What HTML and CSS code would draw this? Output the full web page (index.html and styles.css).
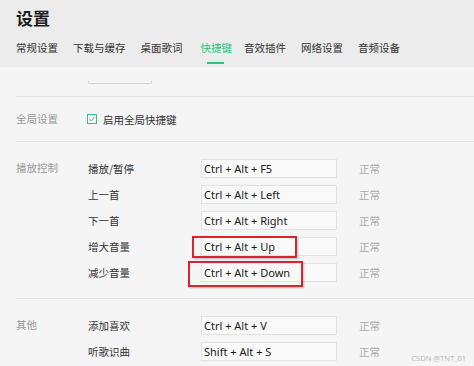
FILE: index.html
```
<!DOCTYPE html>
<html>
<head>
    <meta charset="UTF-8">
    <meta name="viewport" content="width=device-width, initial-scale=1.0">
    <title>设置</title>
    <link rel="stylesheet" href="styles.css">
</head>
<body>
    <div class="header">
        <div class="title">设置</div>
        <div class="tabs">
            <span class="tab">常规设置</span>
            <span class="tab">下载与缓存</span>
            <span class="tab">桌面歌词</span>
            <span class="tab active">快捷键</span>
            <span class="tab">音效插件</span>
            <span class="tab">网络设置</span>
            <span class="tab">音频设备</span>
        </div>
    </div>

    <div class="content">
        <div class="stub"></div>

        <div class="section global">
            <div class="section-title">全局设置</div>
            <div class="rows">
                <label class="row check-row">
                    <span class="checkbox">
                        <svg width="8" height="8" viewBox="0 0 8 8"><path d="M1.5 4.2 L3.3 6 L6.6 2" fill="none" stroke="#31c27c" stroke-width="1"/></svg>
                    </span>
                    启用全局快捷键
                </label>
            </div>
        </div>

        <div class="section">
            <div class="section-title">播放控制</div>
            <div class="rows">
                <div class="row">
                    <span class="row-name">播放/暂停</span>
                    <span class="hotkey">Ctrl + Alt + F5</span>
                    <span class="state">正常</span>
                </div>
                <div class="row">
                    <span class="row-name">上一首</span>
                    <span class="hotkey">Ctrl + Alt + Left</span>
                    <span class="state">正常</span>
                </div>
                <div class="row">
                    <span class="row-name">下一首</span>
                    <span class="hotkey">Ctrl + Alt + Right</span>
                    <span class="state">正常</span>
                </div>
                <div class="row">
                    <span class="row-name">增大音量</span>
                    <span class="hotkey">Ctrl + Alt + Up<i class="mark mark-up"></i></span>
                    <span class="state">正常</span>
                </div>
                <div class="row">
                    <span class="row-name">减少音量</span>
                    <span class="hotkey">Ctrl + Alt + Down<i class="mark mark-down"></i></span>
                    <span class="state">正常</span>
                </div>
            </div>
        </div>

        <div class="section">
            <div class="section-title">其他</div>
            <div class="rows">
                <div class="row">
                    <span class="row-name">添加喜欢</span>
                    <span class="hotkey">Ctrl + Alt + V</span>
                    <span class="state">正常</span>
                </div>
                <div class="row">
                    <span class="row-name">听歌识曲</span>
                    <span class="hotkey">Shift + Alt + S</span>
                    <span class="state">正常</span>
                </div>
            </div>
        </div>
    </div>

    <div class="watermark">CSDN @TNT_01</div>
</body>
</html>
```

FILE: styles.css
```
html, body {
    margin: 0;
    height: 100%;
    overflow: hidden;
}

body {
    font-family: "Noto Sans CJK SC", "Noto Sans", sans-serif;
    background-color: #f5f5f5;
    color: #333;
    position: relative;
}

.header {
    background-color: #ececec;
    padding: 6px 0 3px 16px;
}

.title {
    font-size: 17px;
    font-weight: 700;
    line-height: 24px;
    color: #1e1e1e;
}

.tabs {
    display: flex;
    margin-top: 9px;
}

.tab {
    font-size: 10.5px;
    line-height: 18px;
    padding-bottom: 7px;
    margin-right: 15px;
    position: relative;
    color: #333;
}

.tab.active {
    color: #31c27c;
    margin-left: 3px;
    margin-right: 12px;
}

.tab.active::after {
    content: "";
    position: absolute;
    left: 50%;
    bottom: 0;
    width: 17px;
    height: 2px;
    margin-left: -9px;
    background-color: #31c27c;
}

.content {
    padding-left: 16px;
}

.stub {
    margin-left: 72px;
    margin-top: 14px;
    width: 62px;
    height: 2px;
    border: 1px solid #d4d4d4;
    border-top: none;
    border-radius: 0 0 2px 2px;
    margin-bottom: 12px;
}

.section {
    display: flex;
    border-top: 1px solid #e4e4e4;
    padding: 13px 0;
}

.section.global {
    padding: 9px 0;
}

.section-title {
    width: 72px;
    line-height: 26px;
    font-size: 10.5px;
    color: #999;
}

.rows {
    display: flex;
    flex-direction: column;
}

.row {
    display: flex;
    align-items: center;
    height: 26px;
    font-size: 10.5px;
}

.row-name {
    width: 113px;
    color: #333;
}

.check-row {
    color: #333;
}

.checkbox {
    width: 10px;
    height: 10px;
    box-sizing: border-box;
    border: 1px solid #31c27c;
    display: inline-flex;
    align-items: center;
    justify-content: center;
    margin-left: -1px;
    margin-right: 6px;
    background-color: #fff;
}

.hotkey {
    position: relative;
    width: 136px;
    height: 19px;
    box-sizing: border-box;
    border: 1px solid #e2e2e2;
    background-color: #f9f9f9;
    font-family: "Noto Sans", sans-serif;
    font-size: 11px;
    line-height: 17px;
    padding-left: 2px;
    color: #1a1a1a;
}

.state {
    margin-left: 22px;
    color: #aaa;
}

.mark {
    position: absolute;
    border: 2px solid #d6252c;
    box-shadow: 1px 1px 2px rgba(0, 0, 0, 0.25);
}

.mark-up {
    left: -10px;
    top: -2px;
    width: 101px;
    height: 18px;
}

.mark-down {
    left: -14px;
    top: -3px;
    width: 111px;
    height: 22px;
}

.watermark {
    position: absolute;
    right: 8px;
    bottom: 3px;
    font-family: "Noto Sans", sans-serif;
    font-size: 7.5px;
    color: #b8b8b8;
}
```
